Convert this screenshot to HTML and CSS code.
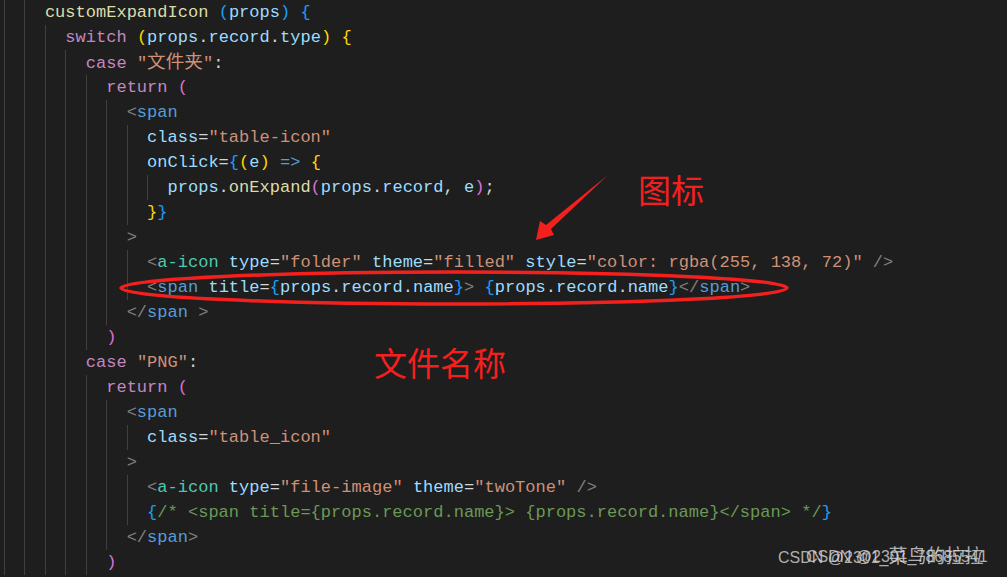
FILE: index.html
```html
<!DOCTYPE html>
<html lang="zh-CN">
<head>
<meta charset="UTF-8">
<meta name="viewport" content="width=device-width, initial-scale=1.0">
<title>customExpandIcon</title>
<link rel="stylesheet" href="styles.css">
</head>
<body>
<div class="shot">
    <div class="editor">
        <div class="ln"><span class="g"></span><span class="g"></span><span class="fn">customExpandIcon</span> <span class="b3">(</span><span class="var">props</span><span class="b3">)</span> <span class="b3">{</span></div>
        <div class="ln"><span class="g"></span><span class="g"></span><span class="g"></span><span class="kw">switch</span> <span class="b1">(</span><span class="var">props</span>.<span class="var">record</span>.<span class="var">type</span><span class="b1">)</span> <span class="b1">{</span></div>
        <div class="ln"><span class="g"></span><span class="g"></span><span class="g"></span><span class="g"></span><span class="kw">case</span> <span class="str">"<span class="cjk">文件夹</span>"</span>:</div>
        <div class="ln"><span class="g"></span><span class="g"></span><span class="g"></span><span class="g"></span><span class="g"></span><span class="kw">return</span> <span class="b2">(</span></div>
        <div class="ln"><span class="g"></span><span class="g"></span><span class="g"></span><span class="g"></span><span class="g"></span><span class="g"></span><span class="pun">&lt;</span><span class="tag">span</span></div>
        <div class="ln"><span class="g"></span><span class="g"></span><span class="g"></span><span class="g"></span><span class="g"></span><span class="g"></span><span class="g"></span><span class="var">class</span>=<span class="str">"table-icon"</span></div>
        <div class="ln"><span class="g"></span><span class="g"></span><span class="g"></span><span class="g"></span><span class="g"></span><span class="g"></span><span class="g"></span><span class="var">onClick</span>=<span class="b3">{</span><span class="b1">(</span><span class="var">e</span><span class="b1">)</span> <span class="tag">=&gt;</span> <span class="b1">{</span></div>
        <div class="ln"><span class="g"></span><span class="g"></span><span class="g"></span><span class="g"></span><span class="g"></span><span class="g"></span><span class="g"></span><span class="g"></span><span class="var">props</span>.<span class="fn">onExpand</span><span class="b2">(</span><span class="var">props</span>.<span class="var">record</span>, <span class="var">e</span><span class="b2">)</span>;</div>
        <div class="ln"><span class="g"></span><span class="g"></span><span class="g"></span><span class="g"></span><span class="g"></span><span class="g"></span><span class="g"></span><span class="b1">}</span><span class="b3">}</span></div>
        <div class="ln"><span class="g"></span><span class="g"></span><span class="g"></span><span class="g"></span><span class="g"></span><span class="g"></span><span class="pun">&gt;</span></div>
        <div class="ln"><span class="g"></span><span class="g"></span><span class="g"></span><span class="g"></span><span class="g"></span><span class="g"></span><span class="g"></span><span class="pun">&lt;</span><span class="cmp">a-icon</span> <span class="var">type</span>=<span class="str">"folder"</span> <span class="var">theme</span>=<span class="str">"filled"</span> <span class="var">style</span>=<span class="str">"color: rgba(255, 138, 72)"</span> <span class="pun">/&gt;</span></div>
        <div class="ln"><span class="g"></span><span class="g"></span><span class="g"></span><span class="g"></span><span class="g"></span><span class="g"></span><span class="g"></span><span class="pun">&lt;</span><span class="tag">span</span> <span class="var">title</span>=<span class="b3">{</span><span class="var">props</span>.<span class="var">record</span>.<span class="var">name</span><span class="b3">}</span><span class="pun">&gt;</span> <span class="b3">{</span><span class="var">props</span>.<span class="var">record</span>.<span class="var">name</span><span class="b3">}</span><span class="pun">&lt;/</span><span class="tag">span</span><span class="pun">&gt;</span></div>
        <div class="ln"><span class="g"></span><span class="g"></span><span class="g"></span><span class="g"></span><span class="g"></span><span class="g"></span><span class="pun">&lt;/</span><span class="tag">span</span> <span class="pun">&gt;</span></div>
        <div class="ln"><span class="g"></span><span class="g"></span><span class="g"></span><span class="g"></span><span class="g"></span><span class="b2">)</span></div>
        <div class="ln"><span class="g"></span><span class="g"></span><span class="g"></span><span class="g"></span><span class="kw">case</span> <span class="str">"PNG"</span>:</div>
        <div class="ln"><span class="g"></span><span class="g"></span><span class="g"></span><span class="g"></span><span class="g"></span><span class="kw">return</span> <span class="b2">(</span></div>
        <div class="ln"><span class="g"></span><span class="g"></span><span class="g"></span><span class="g"></span><span class="g"></span><span class="g"></span><span class="pun">&lt;</span><span class="tag">span</span></div>
        <div class="ln"><span class="g"></span><span class="g"></span><span class="g"></span><span class="g"></span><span class="g"></span><span class="g"></span><span class="g"></span><span class="var">class</span>=<span class="str">"table_icon"</span></div>
        <div class="ln"><span class="g"></span><span class="g"></span><span class="g"></span><span class="g"></span><span class="g"></span><span class="g"></span><span class="pun">&gt;</span></div>
        <div class="ln"><span class="g"></span><span class="g"></span><span class="g"></span><span class="g"></span><span class="g"></span><span class="g"></span><span class="g"></span><span class="pun">&lt;</span><span class="cmp">a-icon</span> <span class="var">type</span>=<span class="str">"file-image"</span> <span class="var">theme</span>=<span class="str">"twoTone"</span> <span class="pun">/&gt;</span></div>
        <div class="ln"><span class="g"></span><span class="g"></span><span class="g"></span><span class="g"></span><span class="g"></span><span class="g"></span><span class="g"></span><span class="b3">{</span><span class="com">/* &lt;span title={props.record.name}&gt; {props.record.name}&lt;/span&gt; */</span><span class="b3">}</span></div>
        <div class="ln"><span class="g"></span><span class="g"></span><span class="g"></span><span class="g"></span><span class="g"></span><span class="g"></span><span class="pun">&lt;/</span><span class="tag">span</span><span class="pun">&gt;</span></div>
        <div class="ln"><span class="g"></span><span class="g"></span><span class="g"></span><span class="g"></span><span class="g"></span><span class="b2">)</span></div>
    </div>

    <!-- red markup drawn over the screenshot -->
    <svg class="marks" width="1007" height="577" viewBox="0 0 1007 577">
        <ellipse cx="454" cy="288" rx="333" ry="16" fill="none" stroke="#f5201e" stroke-width="3.5"/>
        <polygon points="608,175 551,229 554,235 536,240 540,221 546,225" fill="#f5201e"/>
    </svg>
    <div class="note note-icon">图标</div>
    <div class="note note-name">文件名称</div>

    <div class="wm wm-a">CSDN @2301_<span class="wm-cjk">菜鸟的拉拉</span></div>
    <div class="wm wm-b">CSDN @2301_78685541</div>
</div>
</body>
</html>
```

FILE: styles.css
```css
html, body {
    margin: 0;
    padding: 0;
}

body {
    background-color: #1e1e1e;
    overflow: hidden;
}

.shot {
    position: relative;
    width: 1007px;
    height: 577px;
    overflow: hidden;
}

.editor {
    padding-left: 4px;
    font-family: "Liberation Mono", "Noto Sans CJK SC", monospace;
    font-size: 17.05px;
    line-height: 25px;
    color: #d4d4d4;
}

.ln {
    height: 25px;
    white-space: pre;
}

/* indent guides, one per 2 columns */
.g {
    display: inline-block;
    vertical-align: top;
    width: 2ch;
    height: 25px;
    border-left: 1px solid #404040;
    box-sizing: border-box;
}

.cjk {
    font-family: "Noto Sans CJK SC", sans-serif;
    font-size: 18.6px;
    line-height: 20px;
}

.kw  { color: #c586c0; }
.fn  { color: #dcdcaa; }
.var { color: #9cdcfe; }
.str { color: #ce9178; }
.pun { color: #808080; }
.tag { color: #569cd6; }
.cmp { color: #4ec9b0; }
.com { color: #6a9955; }
.b1  { color: #ffd700; }
.b2  { color: #da70d6; }
.b3  { color: #179fff; }

.marks {
    position: absolute;
    left: 0;
    top: 0;
}

.note {
    position: absolute;
    font-family: "Noto Sans CJK SC", sans-serif;
    font-size: 33px;
    line-height: 33px;
    color: #f5201e;
}

.note-icon {
    left: 638px;
    top: 173px;
}

.note-name {
    left: 374px;
    top: 346px;
}

.wm {
    position: absolute;
    top: 547px;
    font-family: "Liberation Sans", "Noto Sans CJK SC", sans-serif;
    font-size: 16px;
    line-height: 20px;
    color: rgba(215, 215, 215, 0.8);
    white-space: nowrap;
}

.wm-a {
    left: 778px;
}

.wm-cjk {
    font-size: 19px;
}

.wm-b {
    left: 806px;
}
```
